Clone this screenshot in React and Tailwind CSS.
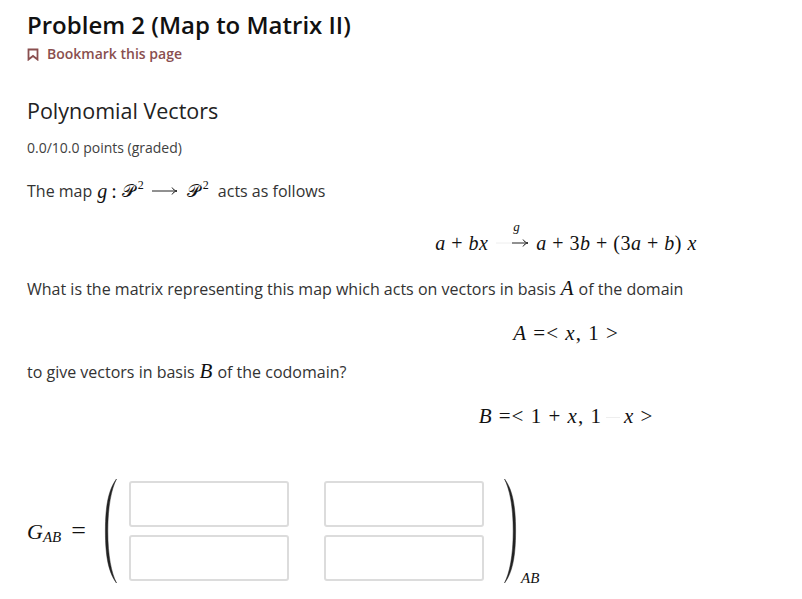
const mathFont = "font-['Liberation_Serif',serif] text-[#111]"

function Paren({ flip }) {
  return (
    <svg width="13" height="106" viewBox="0 0 13 106" className={flip ? "-scale-x-100" : ""}>
      <path d="M12.5 1C5 11 1.4 26 1.4 53S5 95 12.5 105C7.4 95 3.8 78 3.8 53S7.4 11 12.5 1Z" fill="#222" stroke="#222" strokeWidth="0.5" />
    </svg>
  )
}

function Arrow({ faint, width = 34 }) {
  const split = faint ? 17 : 1
  return (
    <svg width={width} height="10" viewBox={`0 0 ${width} 10`} className="inline-block">
      {faint && <path d={`M1 5H${split}`} stroke="#eee" strokeWidth="1" fill="none" />}
      <path d={`M${split} 5H${width - 1}`} stroke="#222" strokeWidth="1" fill="none" />
      <path d={`M${width - 6} 1.5C${width - 5} 3.5 ${width - 3} 4.5 ${width - 1} 5C${width - 3} 5.5 ${width - 5} 6.5 ${width - 6} 8.5`} stroke="#222" strokeWidth="1" fill="none" />
    </svg>
  )
}

function Input() {
  return <input className="block w-[160px] h-[46px] rounded-[3px] border-2 border-[#dcdcdc] bg-white" />
}

export default function App() {
  return (
    <div className="w-[802px] h-[599px] overflow-hidden bg-white pl-[27px] pt-[9px] font-['Open_Sans',sans-serif] text-[#333]">
      <h1 className="text-[24px] leading-[32px] font-semibold text-[#111]">Problem 2 (Map to Matrix II)</h1>
      <a className="mt-[2px] flex items-center gap-[8px] text-[14px] leading-[22px] font-semibold text-[#8a4f4f]">
        <svg width="12" height="13" viewBox="0 0 12 13" fill="none" stroke="#8a4f4f" strokeWidth="1.8">
          <path d="M1.5 1.5H10.5V11.5L6 8L1.5 11.5Z" />
        </svg>
        Bookmark this page
      </a>

      <h2 className="mt-[30px] text-[21.5px] leading-[32px] text-[#222]">Polynomial Vectors</h2>
      <p className="mt-[10px] text-[14px] leading-[22px] text-[#414141]">0.0/10.0 points (graded)</p>

      <p className="mt-[19px] flex h-[26px] items-center text-[16px]">
        The map
        <span className={`${mathFont} ml-[5px] flex items-center text-[20px]`}>
          <i>g</i>
          <span className="ml-[4px] mr-[5px]">:</span>
          <span className="text-[18px]">𝒫</span><sup className="ml-[3px] text-[12px]">2</sup>
          <span className="ml-[7px] mr-[9px] flex"><Arrow width={27} /></span>
          <span className="text-[18px]">𝒫</span><sup className="ml-[3px] text-[12px]">2</sup>
        </span>
        <span className="ml-[9px]">acts as follows</span>
      </p>

      <div className={`${mathFont} relative ml-[303px] mt-[25px] flex h-[28px] w-[472px] items-center justify-center whitespace-pre text-[20px] tracking-[0.5px]`}>
        <i>a</i> + <i>bx</i>
        <span className="relative mx-[7px] flex">
          <Arrow faint />
          <i className="absolute left-[18px] top-[-21px] text-[13px]">g</i>
        </span>
        <i>a</i> + 3<i>b</i> + (3<i>a</i> + <i>b</i>) <i>x</i>
      </div>

      <p className="mt-[19px] flex h-[26px] items-center text-[16px]">
        What is the matrix representing this map which acts on vectors in basis
        <i className={`${mathFont} mx-[5px] text-[21px]`}>A</i>
        of the domain
      </p>

      <div className={`${mathFont} ml-[303px] mt-[18px] flex h-[28px] w-[472px] items-center justify-center whitespace-pre text-[21px] tracking-[1px]`}>
        <i>A</i> =&lt; <i>x</i>, 1 &gt;
      </div>

      <p className="mt-[11px] flex h-[26px] items-center text-[16px]">
        to give vectors in basis
        <i className={`${mathFont} mx-[5px] text-[21px]`}>B</i>
        of the codomain?
      </p>

      <div className={`${mathFont} ml-[303px] mt-[18px] flex h-[28px] w-[472px] items-center justify-center whitespace-pre text-[21px] tracking-[1px]`}>
        <i>B</i> =&lt; 1 + <i>x</i>, 1
        <span className="mx-[4px] inline-block h-px w-[14px] bg-[#eee]" />
        <i>x</i> &gt;
      </div>

      <div className="mt-[47px] flex h-[106px] items-center">
        <div className={`${mathFont} flex w-[77px] items-baseline text-[22px]`}>
          <i>G</i>
          <i className="text-[15px] translate-y-[3px]">AB</i>
          <span className="ml-[10px] text-[26px] leading-none">=</span>
        </div>
        <Paren />
        <div className="ml-[12px] grid grid-cols-[160px_160px] gap-x-[35px] gap-y-[8px]">
          <Input />
          <Input />
          <Input />
          <Input />
        </div>
        <div className="ml-[20px]">
          <Paren flip />
        </div>
        <i className={`${mathFont} ml-[4px] self-end translate-y-[2px] text-[15px] leading-[16px]`}>AB</i>
      </div>
    </div>
  )
}
